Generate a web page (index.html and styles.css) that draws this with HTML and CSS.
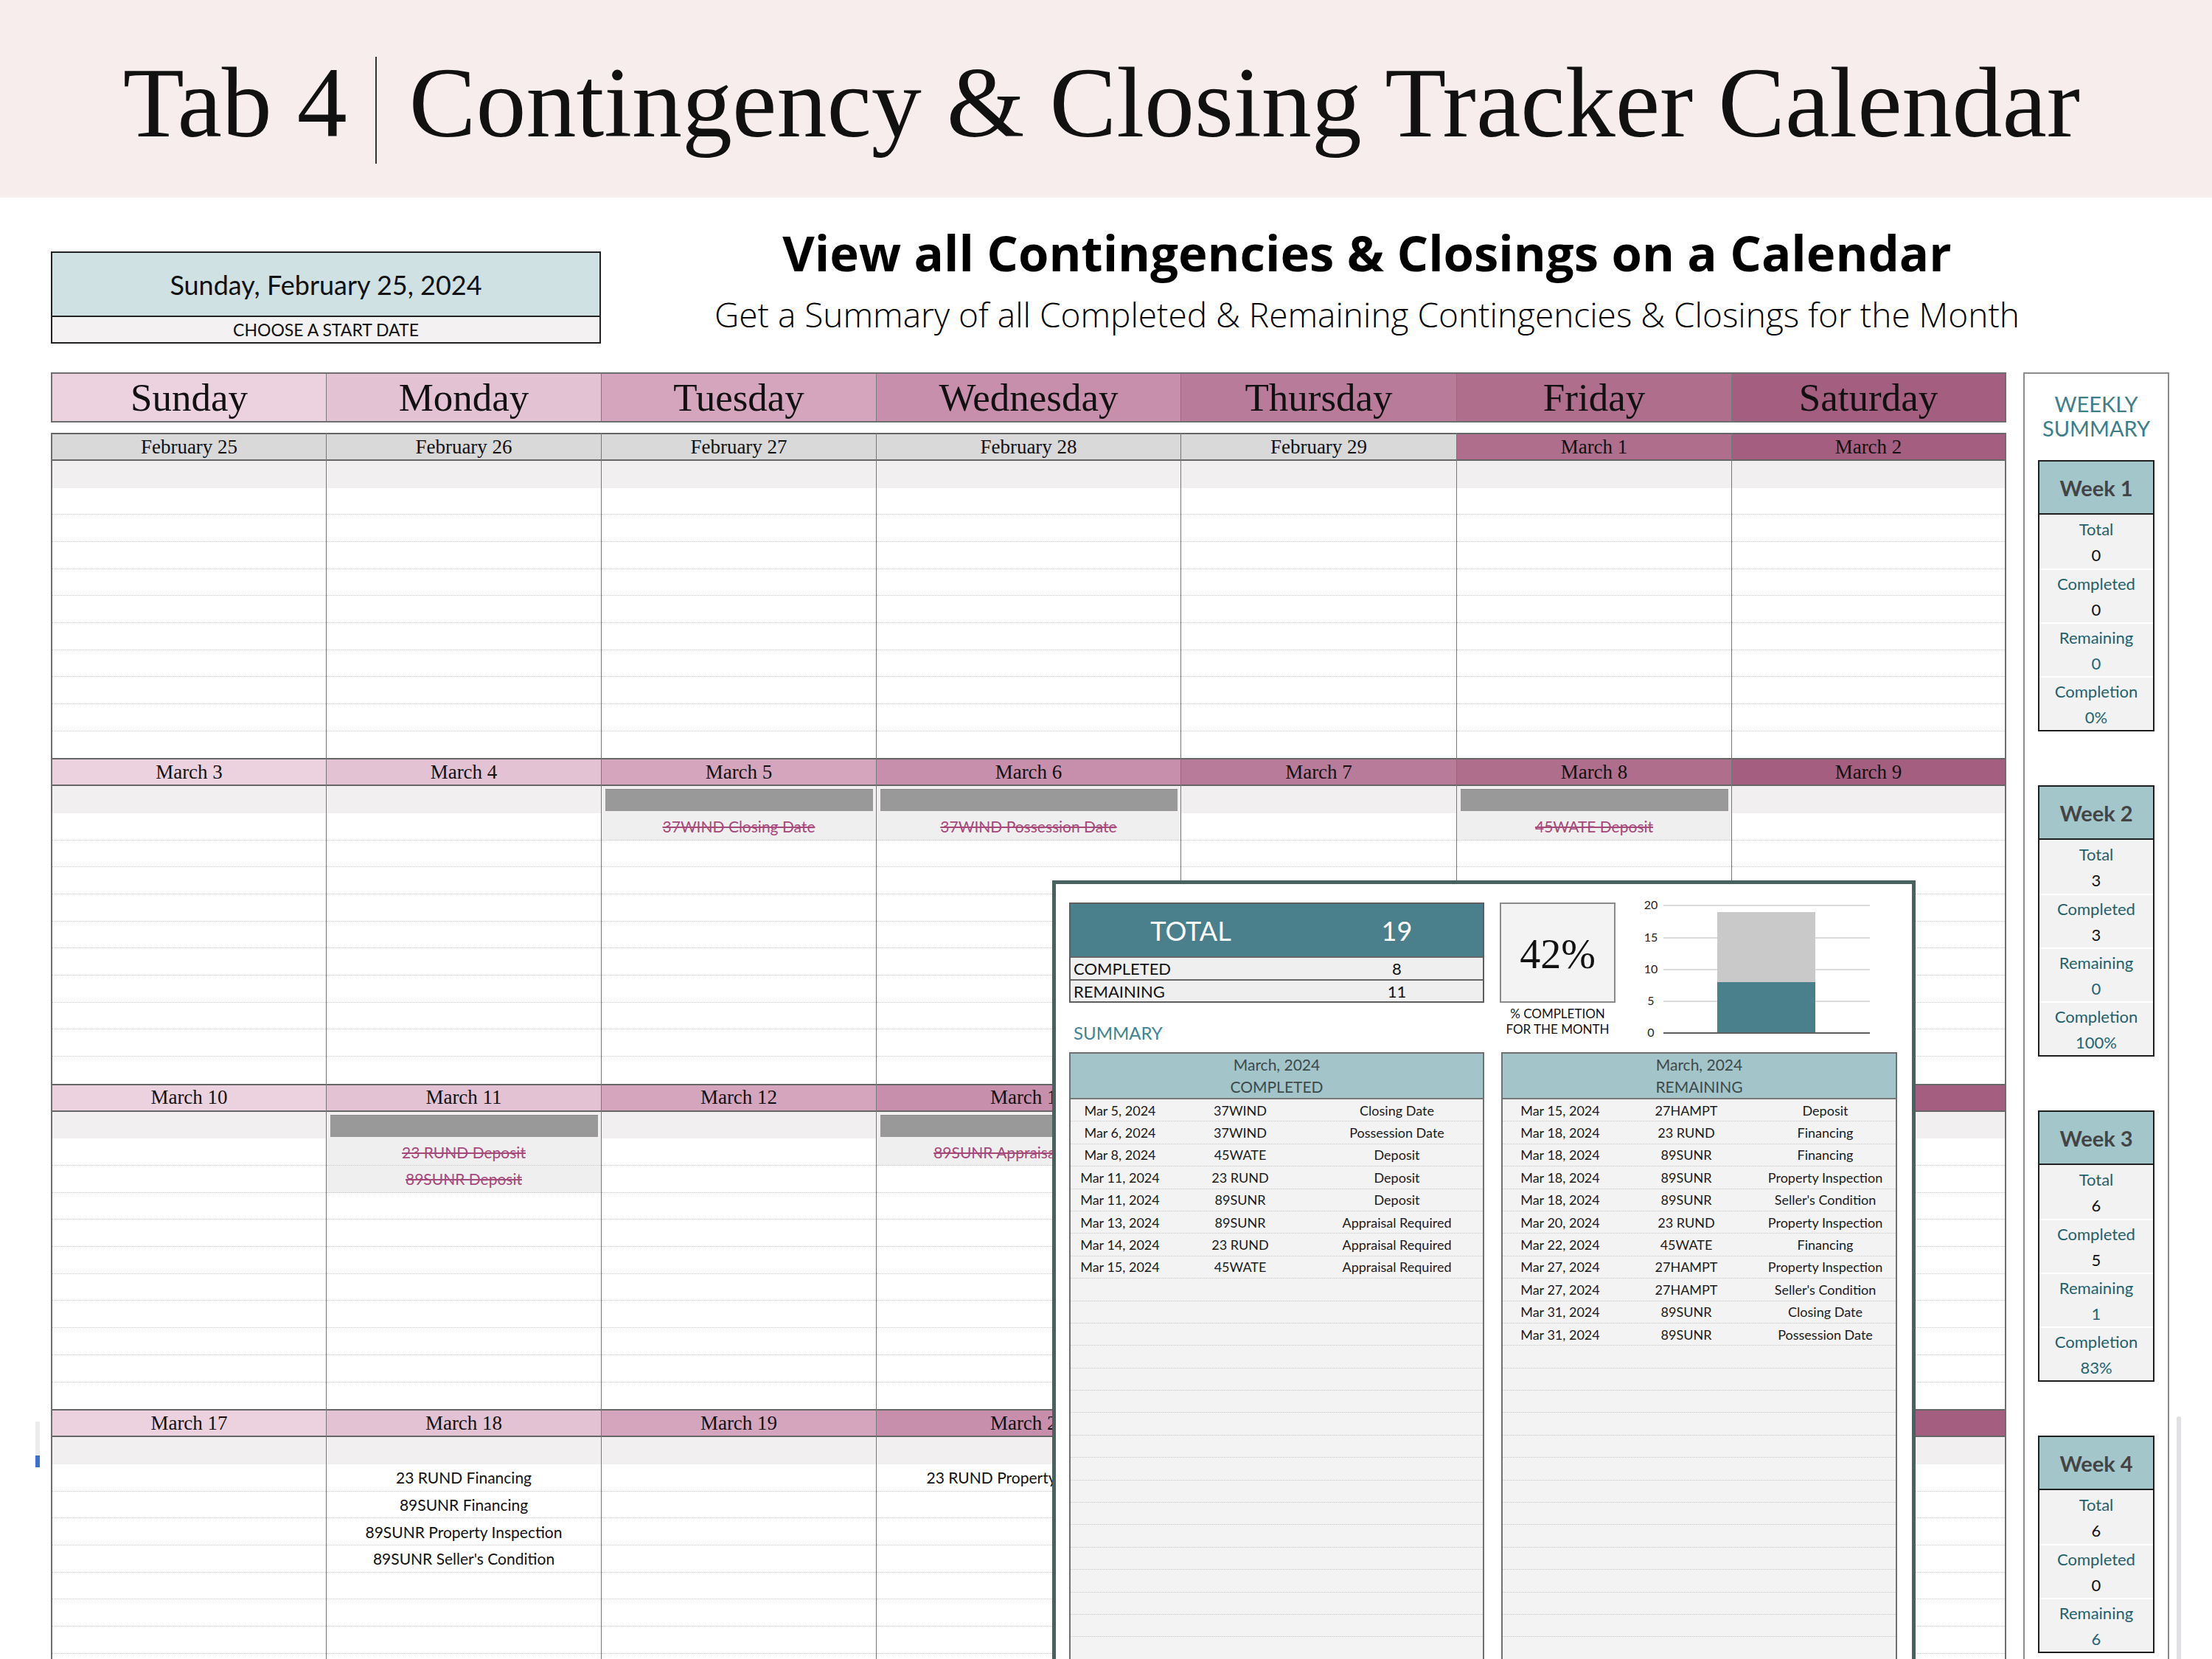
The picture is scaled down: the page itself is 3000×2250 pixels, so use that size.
FILE: index.html
```html
<!DOCTYPE html>
<html lang="en">
<head>
<meta charset="utf-8">
<title>Tab 4 | Contingency &amp; Closing Tracker Calendar</title>
<link rel="stylesheet" href="styles.css">
</head>
<body>
<header class="banner">Tab 4<span class="sep"></span>Contingency &amp; Closing Tracker Calendar</header>

<section class="intro">
  <div class="datebox">
    <div class="d">Sunday, February 25, 2024</div>
    <div class="c">CHOOSE A START DATE</div>
  </div>
  <div class="heading">
    <h1>View all Contingencies &amp; Closings on a Calendar</h1>
    <p>Get a Summary of all Completed &amp; Remaining Contingencies &amp; Closings for the Month</p>
  </div>
</section>

<main class="main">
  <div class="cal">
    <div class="dayrow cols">
      <div class="dn k1">Sunday</div>
      <div class="dn k2">Monday</div>
      <div class="dn k3">Tuesday</div>
      <div class="dn k4">Wednesday</div>
      <div class="dn k5">Thursday</div>
      <div class="dn k6">Friday</div>
      <div class="dn k7">Saturday</div>
    </div>

    <!-- week 1 -->
    <div class="week cols">
      <div class="day"><div class="dh g">February 25</div><i></i><i></i><i></i><i></i><i></i><i></i><i></i><i></i><i></i><i></i><i></i></div>
      <div class="day"><div class="dh g">February 26</div><i></i><i></i><i></i><i></i><i></i><i></i><i></i><i></i><i></i><i></i><i></i></div>
      <div class="day"><div class="dh g">February 27</div><i></i><i></i><i></i><i></i><i></i><i></i><i></i><i></i><i></i><i></i><i></i></div>
      <div class="day"><div class="dh g">February 28</div><i></i><i></i><i></i><i></i><i></i><i></i><i></i><i></i><i></i><i></i><i></i></div>
      <div class="day"><div class="dh g">February 29</div><i></i><i></i><i></i><i></i><i></i><i></i><i></i><i></i><i></i><i></i><i></i></div>
      <div class="day"><div class="dh k6">March 1</div><i></i><i></i><i></i><i></i><i></i><i></i><i></i><i></i><i></i><i></i><i></i></div>
      <div class="day"><div class="dh k7">March 2</div><i></i><i></i><i></i><i></i><i></i><i></i><i></i><i></i><i></i><i></i><i></i></div>
    </div>

    <!-- week 2 -->
    <div class="week cols">
      <div class="day"><div class="dh k1">March 3</div><i></i><i></i><i></i><i></i><i></i><i></i><i></i><i></i><i></i><i></i><i></i></div>
      <div class="day"><div class="dh k2">March 4</div><i></i><i></i><i></i><i></i><i></i><i></i><i></i><i></i><i></i><i></i><i></i></div>
      <div class="day"><div class="dh k3">March 5</div><i class="bar"></i><i class="ev x">37WIND Closing Date</i><i></i><i></i><i></i><i></i><i></i><i></i><i></i><i></i><i></i></div>
      <div class="day"><div class="dh k4">March 6</div><i class="bar"></i><i class="ev x">37WIND Possession Date</i><i></i><i></i><i></i><i></i><i></i><i></i><i></i><i></i><i></i></div>
      <div class="day"><div class="dh k5">March 7</div><i></i><i></i><i></i><i></i><i></i><i></i><i></i><i></i><i></i><i></i><i></i></div>
      <div class="day"><div class="dh k6">March 8</div><i class="bar"></i><i class="ev x">45WATE Deposit</i><i></i><i></i><i></i><i></i><i></i><i></i><i></i><i></i><i></i></div>
      <div class="day"><div class="dh k7">March 9</div><i></i><i></i><i></i><i></i><i></i><i></i><i></i><i></i><i></i><i></i><i></i></div>
    </div>

    <!-- week 3 -->
    <div class="week cols">
      <div class="day"><div class="dh k1">March 10</div><i></i><i></i><i></i><i></i><i></i><i></i><i></i><i></i><i></i><i></i><i></i></div>
      <div class="day"><div class="dh k2">March 11</div><i class="bar"></i><i class="ev x">23 RUND Deposit</i><i class="ev x">89SUNR Deposit</i><i></i><i></i><i></i><i></i><i></i><i></i><i></i><i></i></div>
      <div class="day"><div class="dh k3">March 12</div><i></i><i></i><i></i><i></i><i></i><i></i><i></i><i></i><i></i><i></i><i></i></div>
      <div class="day"><div class="dh k4">March 13</div><i class="bar"></i><i class="ev x">89SUNR Appraisal Required</i><i></i><i></i><i></i><i></i><i></i><i></i><i></i><i></i><i></i></div>
      <div class="day"><div class="dh k5">March 14</div><i></i><i></i><i></i><i></i><i></i><i></i><i></i><i></i><i></i><i></i><i></i></div>
      <div class="day"><div class="dh k6">March 15</div><i></i><i></i><i></i><i></i><i></i><i></i><i></i><i></i><i></i><i></i><i></i></div>
      <div class="day"><div class="dh k7">March 16</div><i></i><i></i><i></i><i></i><i></i><i></i><i></i><i></i><i></i><i></i><i></i></div>
    </div>

    <!-- week 4 -->
    <div class="week cols">
      <div class="day"><div class="dh k1">March 17</div><i></i><i></i><i></i><i></i><i></i><i></i><i></i><i></i><i></i><i></i><i></i></div>
      <div class="day"><div class="dh k2">March 18</div><i></i><i class="ev">23 RUND Financing</i><i class="ev">89SUNR Financing</i><i class="ev">89SUNR Property Inspection</i><i class="ev">89SUNR Seller's Condition</i><i></i><i></i><i></i><i></i><i></i><i></i></div>
      <div class="day"><div class="dh k3">March 19</div><i></i><i></i><i></i><i></i><i></i><i></i><i></i><i></i><i></i><i></i><i></i></div>
      <div class="day"><div class="dh k4">March 20</div><i></i><i class="ev">23 RUND Property Inspection</i><i></i><i></i><i></i><i></i><i></i><i></i><i></i><i></i><i></i></div>
      <div class="day"><div class="dh k5">March 21</div><i></i><i></i><i></i><i></i><i></i><i></i><i></i><i></i><i></i><i></i><i></i></div>
      <div class="day"><div class="dh k6">March 22</div><i></i><i></i><i></i><i></i><i></i><i></i><i></i><i></i><i></i><i></i><i></i></div>
      <div class="day"><div class="dh k7">March 23</div><i></i><i></i><i></i><i></i><i></i><i></i><i></i><i></i><i></i><i></i><i></i></div>
    </div>
  </div>

  <aside class="weekly">
    <div class="wtitle">WEEKLY<br>SUMMARY</div>
    <div class="wbox">
      <h3>Week 1</h3>
      <div class="p"><span class="l">Total</span><span class="v">0</span></div>
      <div class="p"><span class="l">Completed</span><span class="v">0</span></div>
      <div class="p"><span class="l">Remaining</span><span class="v t">0</span></div>
      <div class="p"><span class="l">Completion</span><span class="v t">0%</span></div>
    </div>
    <div class="wbox">
      <h3>Week 2</h3>
      <div class="p"><span class="l">Total</span><span class="v">3</span></div>
      <div class="p"><span class="l">Completed</span><span class="v">3</span></div>
      <div class="p"><span class="l">Remaining</span><span class="v t">0</span></div>
      <div class="p"><span class="l">Completion</span><span class="v t">100%</span></div>
    </div>
    <div class="wbox">
      <h3>Week 3</h3>
      <div class="p"><span class="l">Total</span><span class="v">6</span></div>
      <div class="p"><span class="l">Completed</span><span class="v">5</span></div>
      <div class="p"><span class="l">Remaining</span><span class="v t">1</span></div>
      <div class="p"><span class="l">Completion</span><span class="v t">83%</span></div>
    </div>
    <div class="wbox">
      <h3>Week 4</h3>
      <div class="p"><span class="l">Total</span><span class="v">6</span></div>
      <div class="p"><span class="l">Completed</span><span class="v">0</span></div>
      <div class="p"><span class="l">Remaining</span><span class="v t">6</span></div>
    </div>
  </aside>
</main>

<section class="panel">
  <div class="ptop">
    <div class="ptotal">
      <div class="tbox">
        <div class="th"><span>TOTAL</span><span>19</span></div>
        <div class="tr"><span>COMPLETED</span><span>8</span></div>
        <div class="tr"><span>REMAINING</span><span>11</span></div>
      </div>
      <div class="slabel">SUMMARY</div>
    </div>
    <div class="pct">
      <div class="pbox">42%</div>
      <div class="pcap">% COMPLETION<br>FOR THE MONTH</div>
    </div>
    <svg class="chart" width="340" height="195" viewBox="0 0 340 195">
      <g stroke="#dcdcdc" stroke-width="2">
        <line x1="44" y1="4" x2="324" y2="4"/>
        <line x1="44" y1="48" x2="324" y2="48"/>
        <line x1="44" y1="91" x2="324" y2="91"/>
        <line x1="44" y1="134" x2="324" y2="134"/>
      </g>
      <rect x="117" y="13" width="133" height="95" fill="#c9c9c9"/>
      <rect x="117" y="108" width="133" height="69" fill="#4a7f8c"/>
      <line x1="44" y1="177" x2="324" y2="177" stroke="#5f5f5f" stroke-width="2"/>
      <g class="ax" text-anchor="middle">
        <text x="27" y="9">20</text>
        <text x="27" y="53">15</text>
        <text x="27" y="96">10</text>
        <text x="27" y="139">5</text>
        <text x="27" y="182">0</text>
      </g>
    </svg>
  </div>
  <div class="tables">
    <div class="tbl tl">
      <div class="thd">March, 2024<br>COMPLETED</div>
      <div class="row"><span>Mar 5, 2024</span><span>37WIND</span><span>Closing Date</span></div>
      <div class="row"><span>Mar 6, 2024</span><span>37WIND</span><span>Possession Date</span></div>
      <div class="row"><span>Mar 8, 2024</span><span>45WATE</span><span>Deposit</span></div>
      <div class="row"><span>Mar 11, 2024</span><span>23 RUND</span><span>Deposit</span></div>
      <div class="row"><span>Mar 11, 2024</span><span>89SUNR</span><span>Deposit</span></div>
      <div class="row"><span>Mar 13, 2024</span><span>89SUNR</span><span>Appraisal Required</span></div>
      <div class="row"><span>Mar 14, 2024</span><span>23 RUND</span><span>Appraisal Required</span></div>
      <div class="row"><span>Mar 15, 2024</span><span>45WATE</span><span>Appraisal Required</span></div>
      <div class="row"></div><div class="row"></div><div class="row"></div><div class="row"></div><div class="row"></div><div class="row"></div>
      <div class="row"></div><div class="row"></div><div class="row"></div><div class="row"></div><div class="row"></div><div class="row"></div>
      <div class="row"></div><div class="row"></div><div class="row"></div><div class="row"></div><div class="row"></div><div class="row"></div>
    </div>
    <div class="tbl tr2">
      <div class="thd">March, 2024<br>REMAINING</div>
      <div class="row"><span>Mar 15, 2024</span><span>27HAMPT</span><span>Deposit</span></div>
      <div class="row"><span>Mar 18, 2024</span><span>23 RUND</span><span>Financing</span></div>
      <div class="row"><span>Mar 18, 2024</span><span>89SUNR</span><span>Financing</span></div>
      <div class="row"><span>Mar 18, 2024</span><span>89SUNR</span><span>Property Inspection</span></div>
      <div class="row"><span>Mar 18, 2024</span><span>89SUNR</span><span>Seller's Condition</span></div>
      <div class="row"><span>Mar 20, 2024</span><span>23 RUND</span><span>Property Inspection</span></div>
      <div class="row"><span>Mar 22, 2024</span><span>45WATE</span><span>Financing</span></div>
      <div class="row"><span>Mar 27, 2024</span><span>27HAMPT</span><span>Property Inspection</span></div>
      <div class="row"><span>Mar 27, 2024</span><span>27HAMPT</span><span>Seller's Condition</span></div>
      <div class="row"><span>Mar 31, 2024</span><span>89SUNR</span><span>Closing Date</span></div>
      <div class="row"><span>Mar 31, 2024</span><span>89SUNR</span><span>Possession Date</span></div>
      <div class="row"></div><div class="row"></div><div class="row"></div><div class="row"></div><div class="row"></div>
      <div class="row"></div><div class="row"></div><div class="row"></div><div class="row"></div><div class="row"></div>
      <div class="row"></div><div class="row"></div><div class="row"></div><div class="row"></div><div class="row"></div>
    </div>
  </div>
</section>

<div class="scroll-r"></div>
<div class="scroll-l"></div>
</body>
</html>
```
FILE: styles.css
```css
* { box-sizing: border-box; margin: 0; padding: 0; }
html, body { width: 3000px; height: 2250px; overflow: hidden; }
body {
  position: relative;
  background: #fff;
  color: #111;
  font-family: Lato, "Liberation Sans", sans-serif;
}

/* banner */
.banner {
  height: 268px;
  background: #f7edec;
  padding: 64px 12px 0 0;
  text-align: center;
  white-space: nowrap;
  font-family: "Liberation Serif", serif;
  font-size: 136px;
  line-height: 150px;
  color: #111;
}
.banner .sep {
  display: inline-block;
  width: 0;
  height: 145px;
  border-left: 2px solid #333;
  vertical-align: -37px;
  margin: 0 44px 0 38px;
}

/* intro */
.intro { display: flex; align-items: flex-start; height: 237px; }
.datebox { margin: 73px 0 0 69px; width: 746px; border: 2px solid #222; }
.datebox .d {
  height: 87px;
  background: #d0e1e4;
  border-bottom: 2px solid #222;
  display: flex; align-items: center; justify-content: center;
  font-size: 36px; color: #111;
}
.datebox .c {
  height: 34px;
  background: #f3f1f1;
  display: flex; align-items: center; justify-content: center;
  font-size: 23px; color: #111;
}
.heading { margin-left: 89px; width: 1900px; text-align: center; color: #000; white-space: nowrap; }
.heading h1 {
  margin-top: 36px;
  font-family: "Open Sans", Lato, sans-serif;
  font-weight: 700;
  font-size: 67px;
  line-height: 76px;
}
.heading p {
  margin-top: 18px;
  font-family: "Open Sans", Lato, sans-serif;
  font-weight: 300;
  font-size: 46px;
  line-height: 56px;
}

/* main */
.main { display: flex; align-items: flex-start; }
.cal { margin-left: 69px; width: 2652px; }
.cols { display: grid; grid-template-columns: 371px 373px 373px 413px 374px 373px 371px; }

.k1 { background: #ecd1de; }
.k2 { background: #e3c3d3; }
.k3 { background: #d4a5bd; }
.k4 { background: #c78fab; }
.k5 { background: #b97b9a; }
.k6 { background: #ae6e8c; }
.k7 { background: #a45e7f; }
.g { background: #d9d9d9; }

.dayrow { height: 68px; border: 2px solid #6e6e6e; margin-bottom: 14px; }
.dn {
  display: flex; align-items: center; justify-content: center;
  font-family: "Liberation Serif", serif;
  font-size: 53px; color: #111;
}
.dn + .dn { border-left: 1px solid #7a7a7a; }

.week { border-left: 2px solid #6e6e6e; border-right: 2px solid #6e6e6e; }
.day + .day { border-left: 1px solid #777; }
.dh {
  height: 38px;
  border-top: 2px solid #666;
  border-bottom: 2px solid #666;
  display: flex; align-items: center; justify-content: center;
  font-family: "Liberation Serif", serif;
  font-size: 27px; color: #111;
}
.day i {
  display: block;
  height: 36.68px;
  border-bottom: 1px dotted #c9c9c9;
  font-style: normal;
}
.day i:first-of-type { background: #f1efef; border-bottom: none; }
.day i:last-of-type { border-bottom: none; }
.day i.bar { padding: 4px 4px 0 5px; }
.day i.bar::after {
  content: "";
  display: block;
  height: 29px;
  background: #999;
  border-top: 1px solid #8a8a8a;
}
.day i.ev {
  display: flex; align-items: center; justify-content: center;
  white-space: nowrap;
  font-size: 21px; color: #111;
}
.day i.x { background: #efefef; color: #a5487a; text-decoration: line-through; }

/* weekly summary */
.weekly {
  margin-left: 23px;
  width: 198px;
  height: 1760px;
  border: 2px solid #8c8c8c;
  padding-top: 24px;
}
.wtitle {
  color: #3c7e8a;
  font-size: 29px;
  line-height: 33px;
  text-align: center;
  margin-bottom: 27px;
}
.wbox { width: 158px; margin: 0 auto 73px; border: 2px solid #1f1f1f; }
.wbox h3 {
  height: 72px;
  background: #a3c6cb;
  border-bottom: 2px solid #1f1f1f;
  display: flex; align-items: center; justify-content: center;
  font-size: 29px; font-weight: 700; color: #444;
}
.wbox .p {
  height: 73px;
  background: #f2f2f2;
  border-top: 2px solid #fff;
  padding-top: 1px;
  text-align: center;
  font-size: 22px;
  line-height: 35px;
}
.wbox h3 + .p { border-top: none; padding-top: 2px; }
.wbox .l { display: block; color: #22606c; }
.wbox .v { display: block; color: #111; }
.wbox .v.t { color: #236574; }

/* summary overlay panel */
.panel {
  position: absolute;
  left: 1427px;
  top: 1194px;
  width: 1171px;
  height: 1100px;
  border: 5px solid #47625f;
  background: #fff;
  padding: 25px 0 0 18px;
}
.ptop { display: flex; align-items: flex-start; height: 203px; }
.ptotal { width: 563px; }
.tbox { border: 2px solid #5d5d5d; }
.tbox .th {
  height: 71px;
  background: #4a7f8c;
  display: grid; grid-template-columns: 326px 1fr; align-items: center;
  color: #fff; font-size: 36px; text-align: center;
}
.tbox .tr {
  height: 31px;
  border-top: 2px solid #666;
  background: #efefef;
  display: grid; grid-template-columns: 326px 1fr; align-items: center;
  font-size: 22px; color: #111;
}
.tbox .tr + .tr { height: 30px; }
.tbox .tr span:first-child { padding-left: 4px; }
.tbox .tr span:last-child { text-align: center; }
.slabel { margin-top: 26px; line-height: 30px; font-size: 24px; color: #3f8494; padding-left: 6px; }

.pct { margin-left: 21px; width: 157px; }
.pbox {
  height: 136px;
  border: 2px solid #8a8a8a;
  background: #f3f3f3;
  display: flex; align-items: center; justify-content: center;
  padding-top: 4px;
  font-family: "Liberation Serif", serif;
  font-size: 56px; color: #111;
}
.pcap { margin-top: 4px; text-align: center; font-size: 17px; line-height: 21px; color: #111; white-space: nowrap; }
.chart { margin-left: 21px; overflow: visible; }
.chart .ax { font-family: Lato, sans-serif; font-size: 16px; fill: #222; }

.tables { display: flex; gap: 23px; }
.tbl { border: 2px solid #707070; border-bottom: none; background: #f3f3f3; }
.tl { width: 563px; }
.tr2 { width: 537px; }
.thd {
  height: 62px;
  background: #a3c5ca;
  border-bottom: 2px solid #777;
  text-align: center;
  font-size: 21px;
  line-height: 30px;
  color: #3d4a4c;
}
.row {
  height: 30.4px;
  border-bottom: 1px dotted #c6c6c6;
  display: grid;
  align-items: center;
  text-align: center;
  font-size: 18px;
  color: #1a1a1a;
  white-space: nowrap;
}
.tl .row { grid-template-columns: 134px 192px 1fr; }
.tr2 .row { grid-template-columns: 156px 186px 1fr; }

/* window chrome remnants */
.scroll-r {
  position: absolute;
  left: 2952px; top: 1921px;
  width: 6px; height: 340px;
  background: #e1e1e5;
  border-radius: 3px 3px 0 0;
}
.scroll-l {
  position: absolute;
  left: 48px; top: 1928px;
  width: 6px; height: 62px;
  background: #ececec;
  border-bottom: 16px solid #3b6fd6;
}
```
